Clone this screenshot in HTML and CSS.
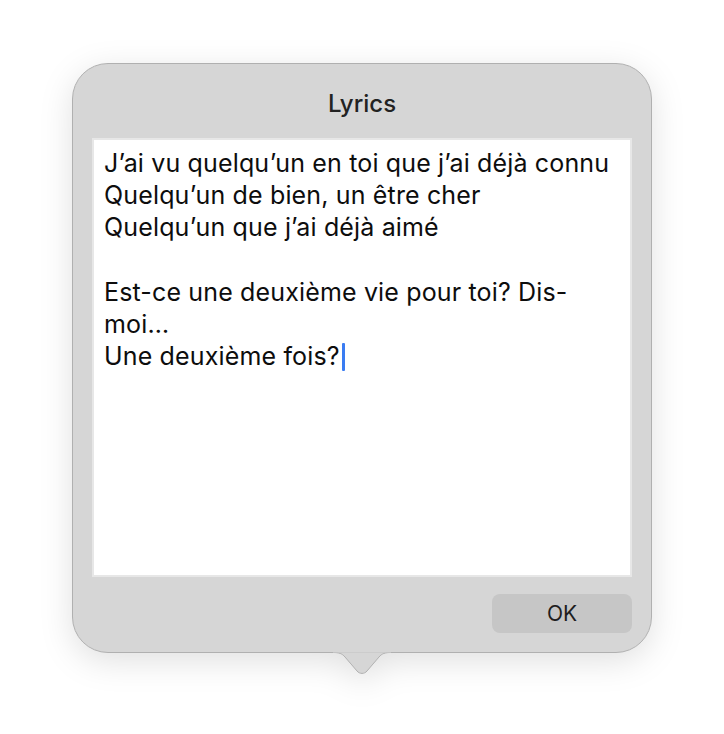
FILE: index.html
```html
<!DOCTYPE html>
<html lang="fr">
<head>
<meta charset="UTF-8">
<meta name="viewport" content="width=device-width, initial-scale=1.0">
<title>Lyrics</title>
<link rel="stylesheet" href="styles.css">
</head>
<body>

<div class="popover">
    <div class="panel">
        <div class="title">Lyrics</div>

        <div class="lyrics">J’ai vu quelqu’un en toi que j’ai déjà connu
Quelqu’un de bien, un être cher
Quelqu’un que j’ai déjà aimé

Est-ce une deuxième vie pour toi? Dis-moi…
Une deuxième fois?<span class="caret"></span></div>

        <div class="actions">
            <button class="button">OK</button>
        </div>
    </div>

    <svg class="arrow" width="58" height="25" viewBox="0 0 58 25">
        <path d="M0 1.5 C6 1.5 9 2.5 12 6 L24 20 C26.5 23.2 31.5 23.2 34 20 L46 6 C49 2.5 52 1.5 58 1.5" fill="#d6d6d6" stroke="#b0b0b0" stroke-width="1"/>
        <path d="M0 0.5 L58 0.5" stroke="#d6d6d6" stroke-width="2"/>
    </svg>
</div>

</body>
</html>
```

FILE: styles.css
```css
body {
    font-family: Inter, "Noto Sans", sans-serif;
    background-color: #fff;
    margin: 0;
    height: 100vh;
}

.popover {
    position: relative;
    width: 580px;
    margin: 63px 0 0 72px;
    filter: drop-shadow(0 8px 16px rgba(0, 0, 0, 0.12));
}

.panel {
    box-sizing: border-box;
    height: 590px;
    background-color: #d6d6d6;
    border: 1px solid #b0b0b0;
    border-radius: 36px;
    padding: 25px 19px 19px;
    display: flex;
    flex-direction: column;
}

.title {
    text-align: center;
    font-size: 24px;
    font-weight: 500;
    line-height: 30px;
    color: #222;
    margin-bottom: 19px;
}

.lyrics {
    height: 439px;
    box-sizing: border-box;
    background-color: #fff;
    border: 2px solid #e7e7e7;
    padding: 7px 10px;
    font-size: 25px;
    line-height: 32.2px;
    letter-spacing: 0.15px;
    color: #0d0d0d;
    white-space: pre-wrap;
}

.caret {
    display: inline-block;
    width: 3px;
    height: 28px;
    margin-left: 2px;
    vertical-align: -6px;
    background-color: #3a7cf2;
    border-radius: 1px;
}

.actions {
    display: flex;
    justify-content: flex-end;
    margin-top: 17px;
}

.button {
    width: 140px;
    height: 39px;
    border: none;
    border-radius: 8px;
    background-color: #c6c6c6;
    color: #1e1e1e;
    font-family: inherit;
    font-size: 21px;
}

.arrow {
    position: absolute;
    left: 261px;
    bottom: -23px;
    display: block;
}
```
